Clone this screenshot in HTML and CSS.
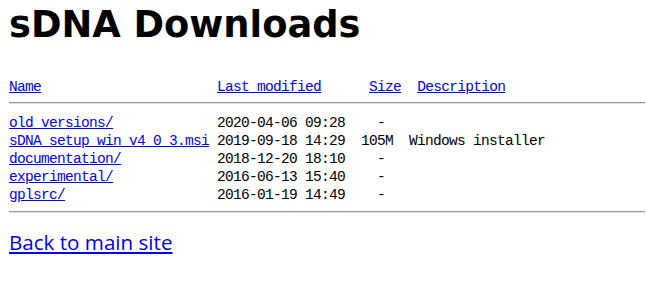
FILE: index.html
```html
<!DOCTYPE html>
<html lang="en">
  <head>
    <meta charset="utf-8">
    <title>sDNA Downloads</title>
    <link rel="stylesheet" href="styles.css">
  </head>
  <body>
    <h1 class="title">sDNA Downloads</h1>
    <div class="listing">
<pre class="row head"><a href="#">Name</a>                      <a href="#">Last modified</a>      <a href="#">Size</a>  <a href="#">Description</a></pre>
      <hr class="rule top">
<pre class="row"><a href="#">old versions/</a>             2020-04-06 09:28    -   </pre>
<pre class="row"><a href="#">sDNA setup win v4 0 3.msi</a> 2019-09-18 14:29  105M  Windows installer</pre>
<pre class="row"><a href="#">documentation/</a>            2018-12-20 18:10    -   </pre>
<pre class="row"><a href="#">experimental/</a>             2016-06-13 15:40    -   </pre>
<pre class="row"><a href="#">gplsrc/</a>                   2016-01-19 14:49    -   </pre>
      <hr class="rule bottom">
    </div>
    <a class="back" href="#">Back to main site</a>
  </body>
</html>
```

FILE: styles.css
```css
body {
  margin: 0 1px 0 9px;
  font-family: 'Open Sans', 'Noto Sans', sans-serif;
  font-size: 20.6px;
  background: #fff;
}

a {
  color: #0000ee;
}

.title {
  margin: 3px 0 0;
  font-family: 'DejaVu Sans', sans-serif;
  font-size: 36.8px;
  line-height: 43px;
  font-weight: 700;
  color: #000;
}

.listing {
  margin-top: 32px;
}

.row {
  margin: 0;
  font-family: 'Liberation Mono', monospace;
  font-size: 14.5px;
  letter-spacing: -0.7px;
  line-height: 18px;
  color: #000;
}

.rule {
  border: 0;
  border-top: 1px solid #9a9a9a;
  border-bottom: 1px solid #e0e0e0;
  margin: 0;
}

.rule.top {
  margin: 6px 0 10px;
}

.rule.bottom {
  margin: 7px 0 0;
}

.back {
  display: inline-block;
  margin-top: 16px;
  line-height: 27px;
}
```
